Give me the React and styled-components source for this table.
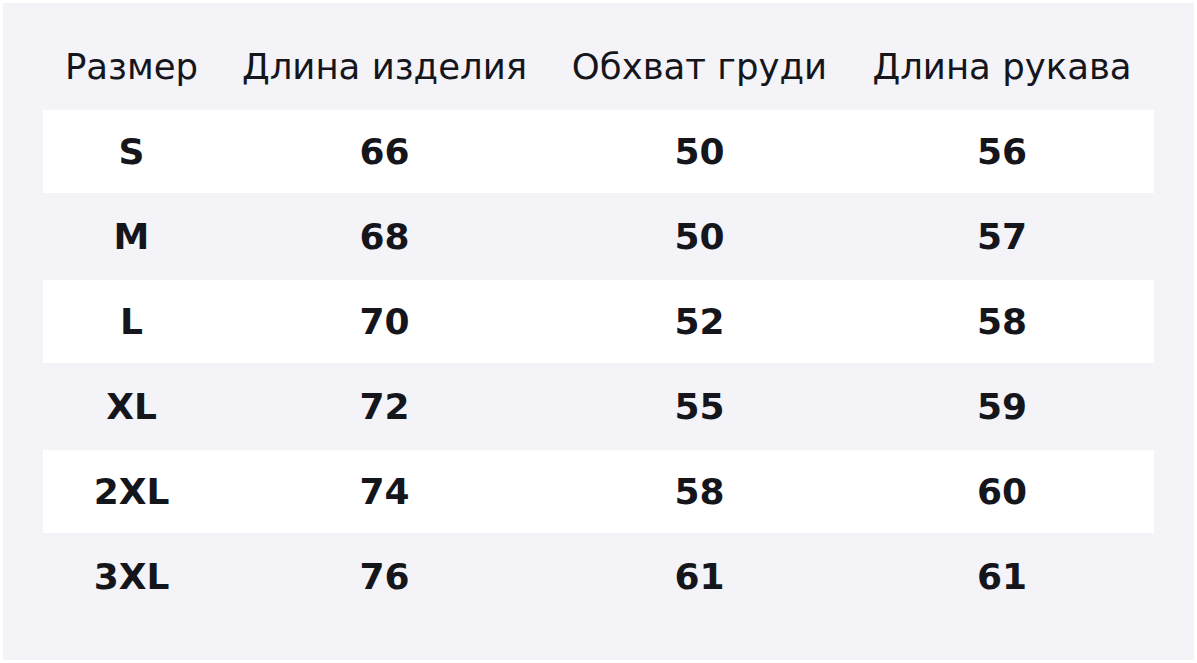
import React from 'react';
import styled, { createGlobalStyle } from 'styled-components';

const GlobalStyle = createGlobalStyle`
  html, body {
    margin: 0;
    padding: 0;
    background: #ffffff;
  }
  body {
    font-family: "DejaVu Sans", "Liberation Sans", sans-serif;
  }
`;

const Page = styled.div`
  padding: 3px;
  width: 1197px;
  height: 663px;
  box-sizing: border-box;
`;

const Panel = styled.div`
  background: #f3f3f8;
  height: 100%;
  box-sizing: border-box;
  padding: 22px 40px 40px;
`;

const Table = styled.div`
  display: grid;
  grid-template-columns: 177px 329px 301px 304px;
  row-gap: 2px;
  color: #15151c;
`;

const Row = styled.div`
  display: contents;
`;

const Cell = styled.div`
  height: 83px;
  display: flex;
  align-items: center;
  justify-content: center;
  white-space: nowrap;
  font-size: ${p => (p.head ? '35.5px' : '36px')};
  font-weight: ${p => (p.head ? 400 : 700)};
  background: ${p => (p.striped ? '#ffffff' : 'transparent')};
`;

const headers = ['Размер', 'Длина изделия', 'Обхват груди', 'Длина рукава'];

const sizes = [
  ['S', 66, 50, 56],
  ['M', 68, 50, 57],
  ['L', 70, 52, 58],
  ['XL', 72, 55, 59],
  ['2XL', 74, 58, 60],
  ['3XL', 76, 61, 61],
];

const App = () => {
  return (
    <Page>
      <GlobalStyle />
      <Panel>
        <Table>
          <Row>
            {headers.map(h => (
              <Cell head key={h}>{h}</Cell>
            ))}
          </Row>
          {sizes.map((row, i) => (
            <Row key={row[0]}>
              {row.map((v, j) => (
                <Cell striped={i % 2 === 0} key={j}>{v}</Cell>
              ))}
            </Row>
          ))}
        </Table>
      </Panel>
    </Page>
  );
};

export default App;
